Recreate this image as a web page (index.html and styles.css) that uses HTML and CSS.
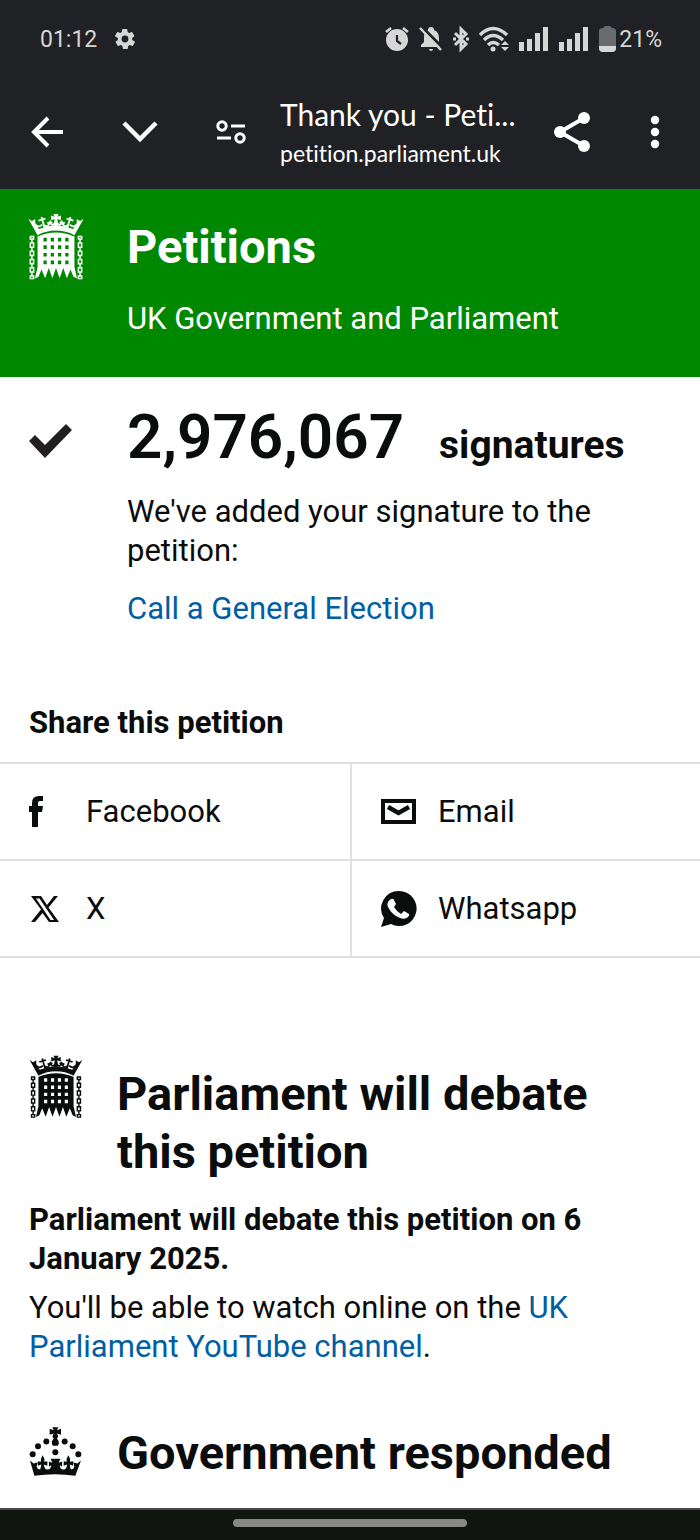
FILE: index.html
```html
<!DOCTYPE html>
<html lang="en">
<head>
<meta charset="utf-8">
<meta name="viewport" content="width=device-width, initial-scale=1">
<title>Thank you - Petitions</title>
<link rel="stylesheet" href="styles.css">
</head>
<body>
<svg class="sprite" width="0" height="0" aria-hidden="true">
  <symbol id="portcullis" viewBox="25 24 170 204">
    <g id="crown-half">
      <path fill="currentColor" d="M26 40L37 47L47 41L47 54L58 71Q84 61 111 61V76Q80 76 54 90Z"/>
      <path fill="none" stroke="currentColor" stroke-width="5.500" d="M66 35L75 66M57 46L78 40M46 56Q56 70 68 58M75 60Q87 68 91 50M83 53L99 51M92 46Q94 66 107 54"/>
    </g>
    <use href="#crown-half" transform="translate(220 0) scale(-1 1)"/>
    <g fill="currentColor">
      <path d="M102 26h16l-4 8 11-4v15l-11-4 4 24h-16l4-24-11 4V30l11 4z"/>
      <path fill-rule="evenodd" d="M54 94Q82 82 110 82T166 94V187L174 222L163 216L154 194L143 221L132 190L121 221L110 190L99 221L88 190L77 221L66 194L57 216L46 222L54 187ZM72 98v11h10V98zm22 0v11h10V98zm22 0v11h10V98zm22 0v11h10V98zM72 121v11h10v-11zm22 0v11h10v-11zm22 0v11h10v-11zm22 0v11h10v-11zM72 144v11h10v-11zm22 0v11h10v-11zm22 0v11h10v-11zm22 0v11h10v-11zM72 167v11h10v-11zm22 0v11h10v-11zm22 0v11h10v-11zm22 0v11h10v-11z"/>
    </g>
    <g fill="none" stroke="currentColor" stroke-width="4.500">
      <path d="M32 94h10v8H32zM32 114h10v13H32zM32 139h10v13H32zM32 164h10v13H32zM32 189h10v13H32zM32 214h10v8H32zM178 94h10v8h-10zM178 114h10v13h-10zM178 139h10v13h-10zM178 164h10v13h-10zM178 189h10v13h-10zM178 214h10v8h-10z"/>
      <path d="M37 102v12M37 127v12M37 152v12M37 177v12M37 202v12M183 102v12M183 127v12M183 152v12M183 177v12M183 202v12"/>
    </g>
  </symbol>
  <symbol id="signal" viewBox="0 0 30 24">
    <path fill="currentColor" d="M0 15h5v9H0zM8 12h5v12H8zM16 6h5v18h-5zM24 0h5v24h-5z"/>
  </symbol>
</svg>

<div class="device-bar">
  <div class="status">
    <time>01:12</time>
    <svg class="gear" width="20" height="20" viewBox="2 2 20 20" aria-hidden="true"><path fill="currentColor" d="M19.1 13a7 7 0 0 0 0-2l2.1-1.600a.5.5 0 0 0 .1-.6l-2-3.500a.5.5 0 0 0-.6-.2l-2.500 1a7 7 0 0 0-1.600-1l-.4-2.700a.5.5 0 0 0-.5-.4h-4a.5.5 0 0 0-.5.4l-.4 2.700a7 7 0 0 0-1.600 1l-2.500-1a.5.5 0 0 0-.6.2l-2 3.500a.5.5 0 0 0 .1.6L4.900 11a7 7 0 0 0 0 2l-2.100 1.600a.5.5 0 0 0-.1.6l2 3.500c.1.2.4.3.6.2l2.500-1a7 7 0 0 0 1.600 1l.4 2.700c0 .2.2.4.5.4h4c.2 0 .5-.2.5-.4l.4-2.700a7 7 0 0 0 1.600-1l2.500 1c.2.1.5 0 .6-.2l2-3.500a.5.5 0 0 0-.1-.6zM12 15.400a3.400 3.400 0 1 1 0-6.800 3.400 3.400 0 0 1 0 6.800z"/></svg>
    <div class="indicators">
      <svg width="24" height="26" viewBox="0 0 24 26" aria-hidden="true"><circle cx="12" cy="14" r="11" fill="currentColor"/><path d="M1 6l5-4M23 6l-5-4" stroke="currentColor" stroke-width="2.500"/><path d="M12 9v6l4 3" fill="none" stroke="#202124" stroke-width="2.200"/></svg>
      <svg width="24" height="26" viewBox="0 0 24 26" aria-hidden="true"><path fill="currentColor" d="M9 4q0-3 3-3t3 3q5 2 5 8v6l2 3H2v-2l3-3v-6q0-4 4-6zM10 23h4q0 2-2 2t-2-2z"/><path d="M3 1l22 22" stroke="#202124" stroke-width="3"/><path d="M1 2l21 22" stroke="currentColor" stroke-width="2.400"/></svg>
      <svg width="16" height="26" viewBox="0 0 16 26" aria-hidden="true"><path d="M2 7l11 11-5 5V3l5 5L2 19" fill="none" stroke="currentColor" stroke-width="3"/><path d="M0 13h3M13 13h3" stroke="currentColor" stroke-width="3"/></svg>
      <svg width="30" height="26" viewBox="0 0 30 26" aria-hidden="true"><g fill="none" stroke="currentColor" stroke-width="3.400"><path d="M1 9q13-13 27 0M5 14q9-9 19 0M9 19q5-5 11 0"/></g><circle cx="14" cy="23" r="2.500" fill="currentColor"/><path fill="currentColor" d="M22 19l4-4 4 4zM22 21h8l-4 4z"/></svg>
      <svg width="30" height="24" aria-hidden="true"><use href="#signal"/></svg>
      <svg width="30" height="24" aria-hidden="true"><use href="#signal"/></svg>
      <span class="battery"><svg width="17" height="26" viewBox="0 0 17 26" aria-hidden="true"><path fill="#6a6b6e" d="M4 2l2-2h5l2 2q4 0 4 3v17q0 4-4 4H4q-4 0-4-4V5q0-3 4-3z"/><path fill="currentColor" d="M0 20h17v2q0 4-4 4H4q-4 0-4-4z"/></svg>21%</span>
    </div>
  </div>
  <div class="toolbar">
    <button type="button" aria-label="Back"><svg width="34" height="34" viewBox="0 0 34 34"><path d="M18 3L4 17l14 14M4 17h29" fill="none" stroke="currentColor" stroke-width="4"/></svg></button>
    <button type="button" aria-label="Minimise"><svg width="36" height="34" viewBox="0 0 36 34"><path d="M2 8l16 16L34 8" fill="none" stroke="currentColor" stroke-width="4.500"/></svg></button>
    <button type="button" class="site" aria-label="Site settings"><svg width="32" height="34" viewBox="0 0 32 34"><g fill="none" stroke="currentColor" stroke-width="3"><circle cx="8" cy="11" r="4.200"/><circle cx="26" cy="23" r="4.200"/><path d="M17 11h14M3 23h14"/></g></svg></button>
    <div class="page-id"><div class="page-title">Thank you - Peti...</div><div class="page-url">petition.parliament.uk</div></div>
    <button type="button" aria-label="Share"><svg width="40" height="40" viewBox="0 0 40 40"><path d="M30 6L6 20l24 14" fill="none" stroke="currentColor" stroke-width="4"/><g fill="currentColor"><circle cx="30" cy="6" r="6"/><circle cx="6" cy="20" r="6"/><circle cx="30" cy="34" r="6"/></g></svg></button>
    <button type="button" class="more" aria-label="More options"><svg width="10" height="34" viewBox="0 0 10 34"><g fill="currentColor"><circle cx="5" cy="5" r="4.200"/><circle cx="5" cy="17" r="4.200"/><circle cx="5" cy="29" r="4.200"/></g></svg></button>
  </div>
</div>

<header class="banner">
  <svg width="56" height="68" aria-hidden="true"><use href="#portcullis"/></svg>
  <div class="banner-text">
    <h1>Petitions</h1>
    <p>UK Government and Parliament</p>
  </div>
</header>

<main>
  <section class="thanks">
    <svg class="tick" width="43" height="34" viewBox="0 0 43 34" aria-hidden="true"><path fill="#231f20" d="M0 17l6-6 10 10L37 0l6 6-27 28z"/></svg>
    <div>
      <p class="count"><strong>2,976,067</strong><span>signatures</span></p>
      <p class="added">We've added your signature to the petition:</p>
      <p><a href="#petition">Call a General Election</a></p>
    </div>
  </section>

  <section>
    <h2 class="share-title">Share this petition</h2>
    <ul class="share">
      <li><a href="#facebook"><svg width="36" height="36" viewBox="0 0 36 36" aria-hidden="true"><path fill="currentColor" d="M14 2v5h-3q-2 0-2 2v3h5l-1 6H9v15H3V18H0v-6h3V9q0-7 7-7z"/></svg>Facebook</a></li>
      <li><a href="#email"><svg width="36" height="36" viewBox="0 0 36 36" aria-hidden="true"><path d="M2 7h31v21H2z" fill="none" stroke="currentColor" stroke-width="4"/><path d="M7 13l10.500 6L28 13" fill="none" stroke="currentColor" stroke-width="4.500"/></svg>Email</a></li>
      <li><a href="#x"><svg width="36" height="36" viewBox="0 0 36 36" aria-hidden="true"><path fill="currentColor" fill-rule="evenodd" d="M2 5h10l6 9 7-9h4L19.500 16.500 30 31H20l-6.500-9L6 31H2l10-12.500zM7 7.500L21.500 29H25L10.500 7.500z"/></svg>X</a></li>
      <li><a href="#whatsapp"><svg width="36" height="36" viewBox="0 0 36 36" aria-hidden="true"><path fill="currentColor" d="M18 0a17.500 17.500 0 1 1-8 33L0 36l3-9A17.500 17.500 0 0 1 18 0z"/><path fill="#fff" d="M10 8q2-1 3 1l2 4-2 3q3 5 7 7l3-3 5 3q1 1-1 3-3 3-8 1-8-3-12-11-2-5 3-8z"/></svg>Whatsapp</a></li>
    </ul>
  </section>

  <section class="debate">
    <div class="section-head">
      <svg width="54" height="64" aria-hidden="true"><use href="#portcullis"/></svg>
      <h2>Parliament will debate this petition</h2>
    </div>
    <p class="date">Parliament will debate this petition on 6 January 2025.</p>
    <p>You'll be able to watch online on the <a href="#youtube">UK Parliament YouTube channel</a>.</p>
  </section>

  <section class="response">
    <div class="section-head">
      <svg width="54" height="51" viewBox="27 22 162 152" aria-hidden="true"><g fill="currentColor">
        <path d="M97 19h18l-4 9 12-4v18l-12-4 4 9-4 6q10 13 2 22h-14q-8-9 2-22l-4-6 4-9-12 4V24l12 4z"/>
        <circle cx="79" cy="62" r="9"/><circle cx="134" cy="62" r="9"/><circle cx="54" cy="76" r="9"/><circle cx="158" cy="76" r="9"/><circle cx="38" cy="100" r="9"/><circle cx="175" cy="100" r="9"/><circle cx="106" cy="94" r="9"/>
        <path d="M30 119l11 9 13-4-4 13q2 10 11 8l3-14-10 4v-14l9 2q-2-10 5-20 7 10 5 20l9-2v14l-10-4q1 16 11 15t11-13l-7 4v-15l10 4-5-12h29l-5 12 10-4v15l-7-4q1 12 11 13t11-15l-10 4v-14l9 2q-2-10 5-20 7 10 5 20l9-2v14l-10-4 3 14q9 2 11-8l-4-13 13 4 11-9-17 46q-60-9-123 0z"/></g></svg>
      <h2>Government responded</h2>
    </div>
  </section>
</main>

<div class="gesture-bar"><span></span></div>
</body>
</html>
```
FILE: styles.css
```css
* { box-sizing: border-box; }

body {
  margin: 0;
  min-height: 100vh;
  display: flex;
  flex-direction: column;
  background: #fff;
  color: #0b0c0c;
  font: 31px/39px Roboto, "Liberation Sans", sans-serif;
}

h1, h2, p, ul { margin: 0; padding: 0; }
a { color: #005ea5; text-decoration: none; }
svg { flex: none; display: block; overflow: visible; }
.sprite { position: absolute; }

.device-bar { background: #202124; color: #fff; }

.status {
  display: flex;
  align-items: center;
  height: 78px;
  padding: 0 38px 0 40px;
  color: #d6d6d6;
  font-size: 23px;
}
.gear { margin-left: 18px; }
.indicators { display: flex; align-items: center; gap: 10px; margin-left: auto; }
.battery { display: flex; align-items: center; gap: 3px; }

.toolbar {
  display: flex;
  align-items: center;
  height: 111px;
  padding: 0 40px 4px 30px;
}
.toolbar button {
  flex: none;
  padding: 0;
  border: 0;
  background: none;
  color: inherit;
  margin-right: 56px;
}
.toolbar button:first-child { margin-right: 58px; }
.toolbar .site { margin-right: 34px; }
.toolbar .more { margin: 0; }
.page-id {
  flex: 1;
  min-width: 0;
  padding-top: 5px;
  white-space: nowrap;
  font-family: Lato, Roboto, sans-serif;
  font-variant-ligatures: none;
}
.page-title { font-size: 30px; }
.page-url { font-size: 23px; }

.banner {
  display: flex;
  gap: 43px;
  padding: 24px 28px 39px;
  background: #008800;
  color: #fff;
}
.banner-text { padding-top: 5px; }
.banner h1 { margin-bottom: 23px; font-size: 47px; line-height: 58px; }

.thanks {
  display: flex;
  gap: 55px;
  padding: 21px 29px 75px;
}
.tick { margin-top: 26px; }
.count {
  display: flex;
  flex-wrap: wrap;
  align-items: baseline;
  column-gap: 35px;
  margin-bottom: 8px;
  font-weight: 700;
  font-size: 39px;
  line-height: 78px;
}
.count strong { font-size: 62px; font-weight: 600; }
.added { margin-bottom: 19px; }

.share-title {
  padding: 0 29px;
  margin-bottom: 20px;
  font-size: 31px;
  line-height: 39px;
}
.share {
  display: grid;
  grid-template-columns: 1fr 1fr;
  list-style: none;
  border-top: 2px solid #dee0e2;
}
.share li { border-bottom: 2px solid #dee0e2; }
.share li:nth-child(even) { border-left: 2px solid #dee0e2; }
.share a {
  display: flex;
  align-items: center;
  gap: 21px;
  padding: 28px 29px;
  color: inherit;
}

.debate { padding: 97px 29px 0; }
.section-head { display: flex; gap: 34px; }
.section-head h2 { font-size: 47px; line-height: 58px; }
.debate h2 { padding-top: 10px; }
.date { margin: 19px 0 10px; font-weight: 700; }
.response { padding: 58px 29px 26px; }
.response .section-head { align-items: center; }

.gesture-bar {
  display: flex;
  justify-content: center;
  align-items: center;
  height: 32px;
  margin-top: auto;
  padding-bottom: 4px;
  border-top: 2px solid #454b46;
  background: #10150f;
}
.gesture-bar span { width: 33.33%; height: 8px; border-radius: 4px; background: #888986; }
```
